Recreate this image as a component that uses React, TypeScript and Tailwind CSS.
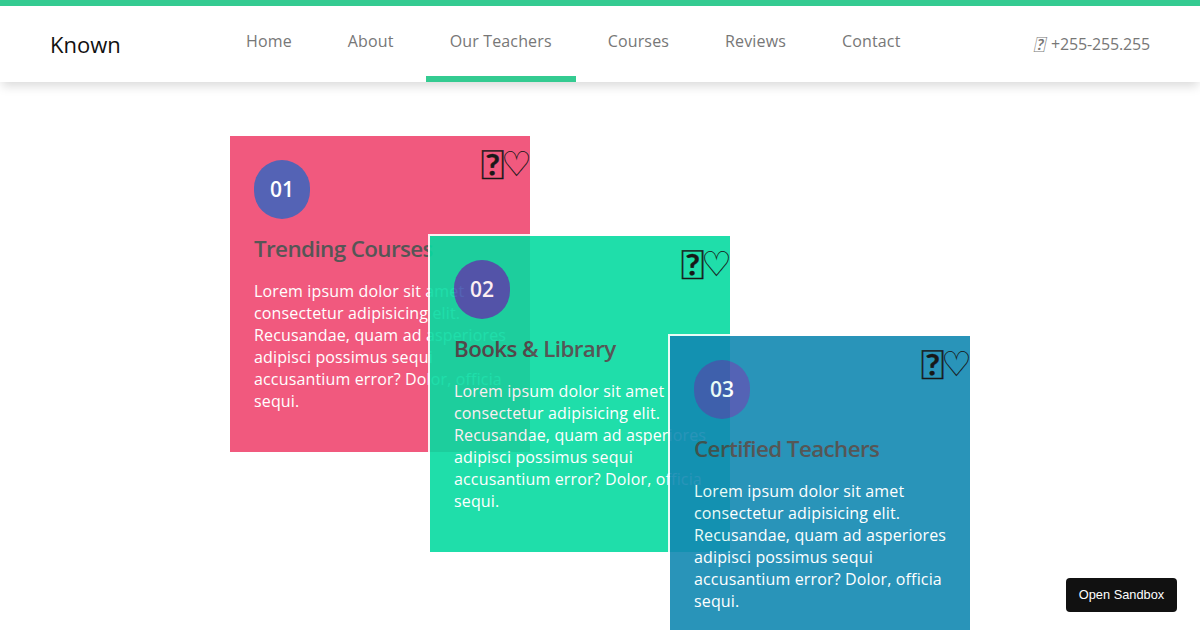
const NAV = ["Home", "About", "Our Teachers", "Courses", "Reviews", "Contact"];

const LOREM =
  "Lorem ipsum dolor sit amet consectetur adipisicing elit. Recusandae, quam ad asperiores adipisci possimus sequi accusantium error? Dolor, officia sequi.";

const CARDS = [
  { num: "01", title: "Trending Courses", bg: "bg-[#f04871]", offset: "" },
  { num: "02", title: "Books & Library", bg: "bg-[#07dba1]", offset: "-ml-[104px] mt-[100px]" },
  { num: "03", title: "Certified Teachers", bg: "bg-[#1289b2]", offset: "-ml-[64px] mt-[200px]" },
];

function Card({ num, title, bg, offset }: { num: string; title: string; bg: string; offset: string }) {
  return (
    <div
      className={`relative w-[304px] h-[320px] shrink-0 border-2 border-white opacity-90 pl-6 pr-4 pt-6 text-white ${bg} ${offset}`}
    >
      {/* Icon font never loaded, so the first glyph is a missing-glyph box */}
      <div className="absolute -right-[2px] top-[7px] flex items-center h-[42px] text-black">
        <span className="inline-block translate-x-[2px] scale-x-110 text-[40px] leading-[42px] [-webkit-text-stroke:0.4px_black] font-['Lato',sans-serif]">
          {"\uE001"}
        </span>
        <span className="text-[34.6px] leading-[42px] font-['DejaVu_Sans',sans-serif]">♡</span>
      </div>
      <div className="w-14 h-[59px] rounded-full bg-[#4253ad] flex items-center justify-center text-[21px] font-semibold">
        {num}
      </div>
      <h3 className="mt-[14px] text-[22.4px] leading-[32px] font-semibold tracking-[-0.6px] text-[#444] whitespace-nowrap">
        {title}
      </h3>
      <p className="mt-[15px] text-[16px] leading-[22px] tracking-[0.15px]">{LOREM}</p>
    </div>
  );
}

export default function App() {
  return (
    <div className="relative h-[630px] overflow-hidden bg-white font-['Open_Sans',sans-serif]">
      <header className="h-[82px] border-t-[6px] border-[#34cb91] bg-white flex shadow-[0_6px_10px_-2px_rgba(0,0,0,0.15)] px-[50px]">
        <div className="w-[172px] pt-[22px] text-[22px] leading-[32px] text-[#111]">Known</div>
        <nav className="flex gap-2">
          {NAV.map((item) => (
            <a
              key={item}
              className={`h-[76px] px-6 pt-[23px] text-[16px] leading-[24px] tracking-[0.15px] text-[#777] ${
                item === "Our Teachers" ? "border-b-[6px] border-[#34cb91]" : ""
              }`}
            >
              {item}
            </a>
          ))}
        </nav>
        <div className="ml-auto flex items-center h-[76px] gap-[5px] text-[16px] tracking-[-0.15px] text-[#777] whitespace-nowrap">
          <span className="inline-block -skew-x-12 font-['Lato',sans-serif] text-[21px] leading-[24px]">{"\uE001"}</span>
          <span>+255-255.255</span>
        </div>
      </header>

      <main className="flex items-start pl-[228px] pt-[52px]">
        {CARDS.map((c) => (
          <Card key={c.num} {...c} />
        ))}
      </main>

      <button className="absolute right-[23px] bottom-[18px] h-[34px] w-[111px] rounded bg-[#111] text-[12.8px] text-white font-['Liberation_Sans',sans-serif]">
        Open Sandbox
      </button>
    </div>
  );
}
